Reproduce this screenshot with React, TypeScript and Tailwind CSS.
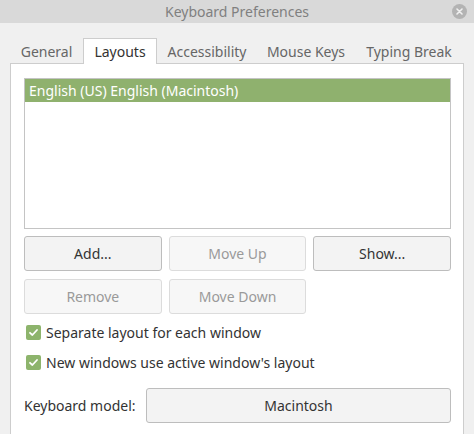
import React from "react";

const font = { fontFamily: '"Noto Sans", "Open Sans", sans-serif' };

function Btn({ label, disabled }: { label: string; disabled?: boolean }) {
  return (
    <div
      className={
        "h-[35px] flex items-center justify-center rounded-[3px] border text-[14px] " +
        (disabled
          ? "border-[#dcdcdc] bg-[#f7f7f7] text-[#9a9a9a]"
          : "border-[#bdbdbd] bg-[#f3f3f3] text-[#333333]")
      }
    >
      {label}
    </div>
  );
}

function Check({ label }: { label: string }) {
  return (
    <div className="flex items-center h-[15px] gap-[5px] pl-[2px]">
      <div className="w-[15px] h-[15px] rounded-[2px] bg-[#8db46c] flex items-center justify-center">
        <svg width="11" height="11" viewBox="0 0 11 11">
          <path d="M2 5.8 L4.4 8 L9 3" stroke="white" strokeWidth="1.8" fill="none" strokeLinecap="round" strokeLinejoin="round" />
        </svg>
      </div>
      <span className="text-[14px] text-[#333333] whitespace-nowrap">{label}</span>
    </div>
  );
}

export default function App() {
  const tabs = [
    { label: "General", w: "w-[73px]" },
    { label: "Layouts", w: "w-[74px]", active: true },
    { label: "Accessibility", w: "w-[100px]" },
    { label: "Mouse Keys", w: "w-[98px]" },
    { label: "Typing Break", w: "w-[108px]" },
  ];
  return (
    <div className="w-[474px] h-[434px] bg-[#f0f0f0] flex flex-col overflow-hidden" style={font}>
      <div className="h-[23px] bg-[#d9d9d9] relative flex items-center justify-center shrink-0">
        <span className="text-[14px] text-[#808080]">Keyboard Preferences</span>
        <div className="absolute right-[7px] top-[4px] w-[15px] h-[15px] rounded-full bg-[#b3b3b3] flex items-center justify-center">
          <svg width="7" height="7" viewBox="0 0 7 7">
            <path d="M1 1 L6 6 M6 1 L1 6" stroke="#f0f0f0" strokeWidth="1.6" strokeLinecap="round" />
          </svg>
        </div>
      </div>
      <div className="pt-[15px] pl-[10px] flex shrink-0 relative z-10">
        {tabs.map((t) => (
          <div
            key={t.label}
            className={
              t.w +
              " h-[26px] flex items-center justify-center text-[14px] whitespace-nowrap " +
              (t.active
                ? "bg-white border border-b-0 border-[#cdcdcd] text-[#333333] -mb-[1px]"
                : "text-[#666666] -mb-[1px]")
            }
          >
            {t.label}
          </div>
        ))}
      </div>
      <div className="mx-[10px] flex-1 bg-white border border-b-0 border-[#cdcdcd] pt-[14px] pl-[13px] pr-[12px] flex flex-col">
        <div className="h-[151px] border border-[#c4c4c4] bg-white">
          <div className="h-[23px] bg-[#8fb16e] text-white text-[14px] flex items-center pl-[4px] whitespace-nowrap">
            English (US) English (Macintosh)
          </div>
        </div>
        <div className="grid grid-cols-3 gap-x-[7px] gap-y-[8px] mt-[7px]">
          <Btn label="Add..." />
          <Btn label="Move Up" disabled />
          <Btn label="Show..." />
          <Btn label="Remove" disabled />
          <Btn label="Move Down" disabled />
        </div>
        <div className="mt-[11px] flex flex-col gap-[15px]">
          <Check label="Separate layout for each window" />
          <Check label="New windows use active window's layout" />
        </div>
        <div className="mt-[18px] flex items-center">
          <span className="text-[14px] text-[#333333] w-[122px] shrink-0 whitespace-nowrap">Keyboard model:</span>
          <div className="flex-1">
            <Btn label="Macintosh" />
          </div>
        </div>
      </div>
    </div>
  );
}
